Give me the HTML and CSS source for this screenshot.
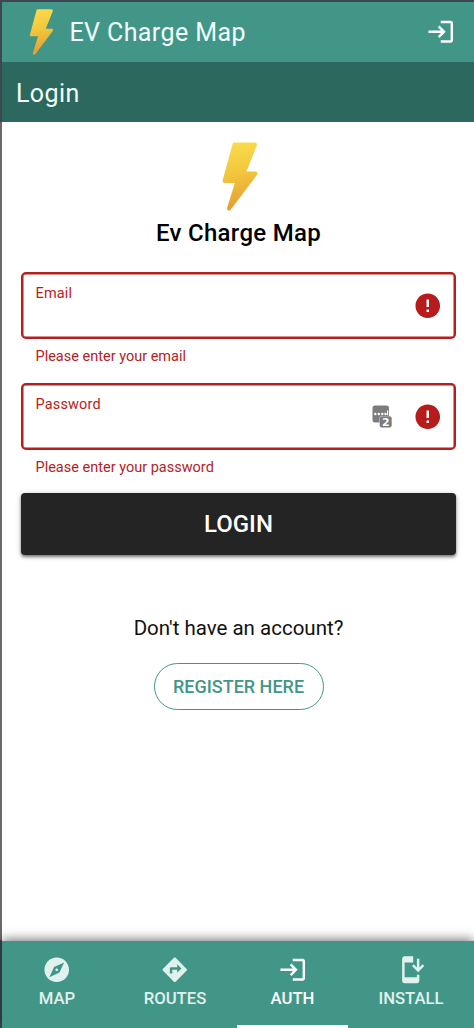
FILE: index.html
```html
<!DOCTYPE html>
<html lang="en">
<head>
<meta charset="utf-8">
<title>EV Charge Map</title>
<link rel="stylesheet" href="styles.css">
</head>
<body>
<svg class="defs" width="0" height="0">
  <defs>
    <linearGradient id="gold" x1="0.4" y1="0" x2="0.5" y2="1"><stop offset="0" stop-color="#f9da4b"/><stop offset="0.45" stop-color="#f2c63c"/><stop offset="1" stop-color="#e69b34"/></linearGradient>
    <symbol id="bolt" viewBox="0 0 36 69"><path d="M12.500 2.500H33L21.500 31.500H33.500L7 66.500L15.500 39H2.500Z" fill="url(#gold)" stroke="url(#gold)" stroke-width="4" stroke-linejoin="round"/></symbol>
    <symbol id="login" viewBox="0 0 24 24"><path d="M11 7L9.600 8.400l2.600 2.600H2v2h10.200l-2.600 2.600L11 17l5-5-5-5zm9 12h-8v2h8c1.100 0 2-.9 2-2V5c0-1.100-.9-2-2-2h-8v2h8v14z"/></symbol>
    <symbol id="error" viewBox="0 0 24 24"><path d="M12 2C6.480 2 2 6.480 2 12s4.480 10 10 10 10-4.480 10-10S17.520 2 12 2zm1 15h-2v-2h2v2zm0-4h-2V7h2v6z"/></symbol>
  </defs>
</svg>
<div class="app">
  <header class="topbar">
    <svg class="logo-small"><use href="#bolt"/></svg>
    <span class="brand">EV Charge Map</span>
    <svg class="icon"><use href="#login"/></svg>
  </header>
  <div class="subbar"><span class="page-name">Login</span></div>
  <main class="content">
    <svg class="logo"><use href="#bolt"/></svg>
    <h1 class="title">Ev Charge Map</h1>
    <form class="form">
      <div class="field">
        <label class="label">Email</label>
        <svg class="icon"><use href="#error"/></svg>
      </div>
      <p class="hint">Please enter your email</p>
      <div class="field">
        <label class="label">Password</label>
        <svg class="manager" viewBox="0 0 20 23">
          <path d="M3 .5H14.500Q17 .5 17 3V11H10Q7.500 11 7.500 13V17.500H3Q.5 17.500 .5 15V3Q.5 .5 3 .5Z"/>
          <rect x="7.700" y="11.200" width="12" height="11.300" rx="2.200"/>
          <g fill="#fff"><circle cx="3.300" cy="9" r="1.200"/><circle cx="6.800" cy="9" r="1.200"/><circle cx="10.300" cy="9" r="1.200"/><circle cx="13.500" cy="9" r="1.200"/><rect x="15" y="5.500" width="1.200" height="4.800"/></g>
          <text x="9.900" y="20.800" class="manager-count">2</text>
        </svg>
        <svg class="icon"><use href="#error"/></svg>
      </div>
      <p class="hint hint-last">Please enter your password</p>
      <button class="submit" type="button">LOGIN</button>
    </form>
    <p class="question">Don't have an account?</p>
    <button class="register" type="button">REGISTER HERE</button>
  </main>
  <nav class="tabs">
    <a class="tab tab-map"><svg class="icon" viewBox="0 0 24 24"><path d="M12 10.900c-.61 0-1.100.49-1.100 1.100s.49 1.100 1.100 1.100c.61 0 1.100-.49 1.100-1.100s-.49-1.100-1.100-1.100zM12 2C6.480 2 2 6.480 2 12s4.480 10 10 10 10-4.480 10-10S17.520 2 12 2zm2.190 12.190L6 18l3.810-8.190L18 6l-3.810 8.190z"/></svg><span>MAP</span></a>
    <a class="tab tab-routes"><svg class="icon" viewBox="0 0 24 24"><path d="M21.710 11.290l-9-9c-.39-.39-1.020-.39-1.410 0l-9 9c-.39.39-.39 1.020 0 1.410l9 9c.39.39 1.020.39 1.410 0l9-9c.39-.38.39-1.010 0-1.410zM14 14.500V12h-4v3H8v-4c0-.55.45-1 1-1h5V7.500l3.500 3.500-3.500 3.500z"/></svg><span>ROUTES</span></a>
    <a class="tab tab-auth active"><svg class="icon"><use href="#login"/></svg><span>AUTH</span></a>
    <a class="tab tab-install"><svg class="icon" viewBox="0 0 24 24"><path d="M17 18H7V6h7V1H7c-1.100 0-2 .9-2 2v18c0 1.100.9 2 2 2h10c1.100 0 2-.9 2-2v-5h-2v2z"/><path d="M18 14l5-5-1.410-1.410L19 10.170V3h-2v7.170l-2.590-2.580L13 9z"/></svg><span>INSTALL</span></a>
  </nav>
</div>
</body>
</html>
```
FILE: styles.css
```css
* { box-sizing: border-box; }
body { margin: 0; font-family: Roboto, sans-serif; background: #fff; }
.defs { display: block; }
.app {
  width: 474px; height: 1028px; display: flex; flex-direction: column; overflow: hidden;
  padding: 2px 0 0 2px;
  background: linear-gradient(#3e4751 122px, #6a6868 122px, #6a6868 940px, #3e4751 940px);
}
.icon { width: 29.5px; height: 29.5px; fill: currentColor; flex: none; display: block; }
.topbar { height: 60px; flex: none; background: #429688; color: #fff; display: flex; align-items: center; padding: 0 18.5px 0 27px; }
.logo-small { width: 25px; height: 46px; margin-top: -1px; }
.brand { font-size: 25px; letter-spacing: 0.4px; margin-left: 15.5px; margin-right: auto; color: #f2fffc; }
.subbar { height: 60px; flex: none; background: #2c685d; display: flex; align-items: center; padding-left: 14px; }
.page-name { color: #f2fffc; font-size: 25px; letter-spacing: 0.4px; margin-top: 2px; }
.content { flex: 1; background: #fff; display: flex; flex-direction: column; align-items: center; padding: 20px 18px 0 19px; }
.logo { width: 36px; height: 69px; margin-left: 3px; }
.title { margin: 7px 0 0; font-size: 24px; line-height: 30px; font-weight: 500; letter-spacing: 0.3px; color: #000; }
.form { width: 100%; margin-top: 24px; }
.field { height: 67px; border: 2px solid #b3211f; box-shadow: inset 0 0 0 0.5px #b3211f; border-radius: 5px; display: flex; align-items: center; padding: 0 12px 0 12.5px; color: #b71c1c; }
.label { align-self: flex-start; margin-top: 10px; margin-right: auto; font-size: 14.5px; line-height: 20px; letter-spacing: 0.15px; }
.manager { width: 20px; height: 23px; fill: #7c7c7c; margin-right: 20.5px; }
.manager-count { font: bold 11px "DejaVu Sans", sans-serif; fill: #fff; }
.hint { margin: 0; padding: 8px 0 0 14.5px; height: 44px; font-size: 14.5px; line-height: 20px; color: #b12426; }
.hint-last { height: 43px; }
.submit { width: 100%; height: 62px; display: block; border: 0; border-radius: 4px; background: #242424; color: #fff; font: 500 24px Roboto, sans-serif; box-shadow: 0 2px 3px rgba(0,0,0,.45), 0 1px 6px rgba(0,0,0,.2); }
.question { margin: 60px 0 0; font-size: 20.5px; line-height: 26px; color: #111; }
.register { margin-top: 22px; width: 170px; height: 47px; padding: 0; border: 1px solid #429688; border-radius: 24px; background: #fff; color: #429688; font: 500 18px Roboto, sans-serif; }
.tabs { height: 87px; flex: none; display: flex; background: #429688; box-shadow: 0 -2px 10px rgba(0,0,0,.5); }
.tab { display: flex; flex-direction: column; align-items: center; padding-top: 14px; color: #e1f1ee; font-size: 16.7px; font-weight: 500; line-height: 20px; gap: 4px; border-bottom: 3px solid transparent; }
.tab-map { width: 111px; padding-right: 1px; }
.tab-routes { width: 124px; }
.tab-auth { width: 111px; }
.tab-install { flex: 1; }
.active { color: #fff; border-bottom-color: #fff; }
```
